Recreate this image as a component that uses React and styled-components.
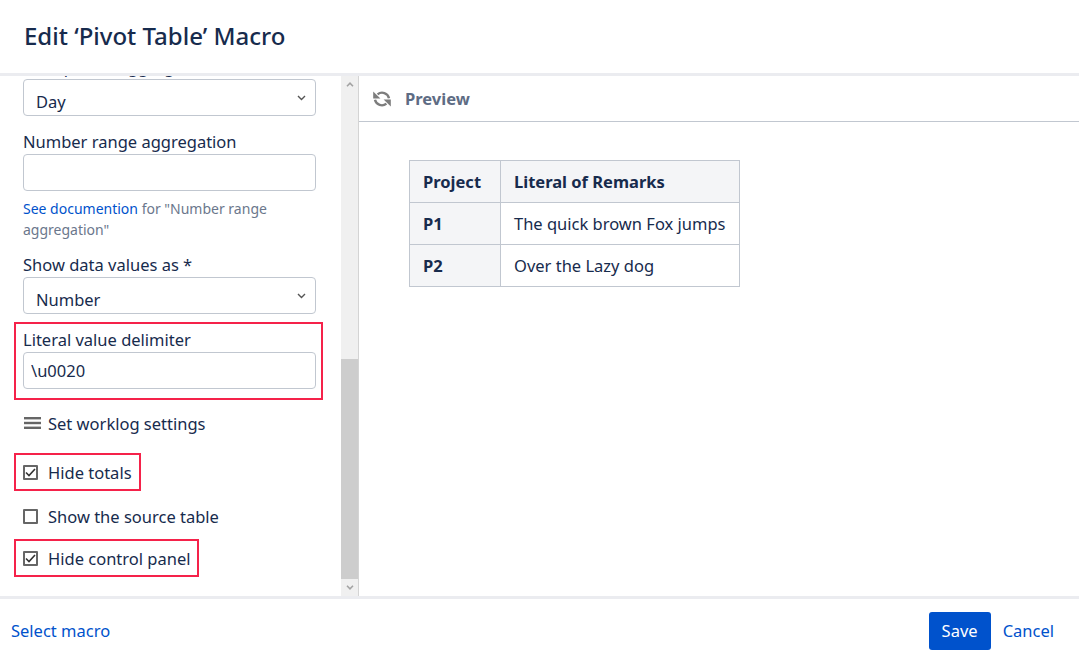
import React from 'react';
import styled, { createGlobalStyle } from 'styled-components';

const GlobalStyle = createGlobalStyle`
  html, body {
    margin: 0;
    padding: 0;
    height: 100%;
    background: #fff;
  }
  body {
    font-family: "Noto Sans", "Open Sans", sans-serif;
    color: #172b4d;
  }
  #root {
    height: 100%;
  }
  * {
    box-sizing: border-box;
  }
`;

const TEXT = '16.5px';

const Dialog = styled.div`
  display: flex;
  flex-direction: column;
  width: 100%;
  height: 100vh;
  overflow: hidden;
`;

const Header = styled.header`
  display: flex;
  align-items: center;
  height: 76px;
  padding: 0 24px 3px;
  border-bottom: 3px solid #ebecf0;
  flex-shrink: 0;
`;

const Title = styled.h1`
  margin: 0;
  font-size: 24px;
  font-weight: 500;
  color: #172b4d;
`;

const Body = styled.div`
  display: flex;
  flex: 1;
  min-height: 0;
`;

const Sidebar = styled.aside`
  display: flex;
  width: 359px;
  flex-shrink: 0;
  border-right: 1px solid #d4d4d4;
`;

const SidebarContent = styled.div`
  flex: 1;
  min-width: 0;
  overflow: hidden;
  padding: 0 25px 0 23px;
`;

const Scrollbar = styled.div`
  display: flex;
  flex-direction: column;
  width: 17px;
  background: #f0f0f0;
  flex-shrink: 0;
`;

const ScrollButton = styled.div`
  display: flex;
  align-items: center;
  justify-content: center;
  height: 17px;
  flex-shrink: 0;
`;

const ScrollTrack = styled.div`
  flex: 1;
  display: flex;
  flex-direction: column;
  justify-content: flex-end;
`;

const ScrollThumb = styled.div`
  height: 220px;
  background: #cdcdcd;
`;

const Field = styled.div`
  display: flex;
  flex-direction: column;
  margin-top: ${(p) => p.$top || 0}px;
`;

const Label = styled.label`
  font-size: ${TEXT};
  line-height: 24px;
  color: #172b4d;
`;

const SelectWrap = styled.div`
  position: relative;
`;

const Select = styled.select`
  appearance: none;
  width: 100%;
  height: 37px;
  padding: 7px 30px 0 12px;
  border: 1px solid #c1c7d0;
  border-radius: 4px;
  background: #fff;
  font-family: inherit;
  font-size: ${TEXT};
  color: #172b4d;
  outline: none;
`;

const Chevron = styled.svg`
  position: absolute;
  right: 10px;
  top: 16px;
  pointer-events: none;
`;

const Input = styled.input`
  width: 100%;
  height: 37px;
  padding: 0 7px;
  border: 1px solid #c1c7d0;
  border-radius: 4px;
  background: #fff;
  font-family: inherit;
  font-size: ${TEXT};
  color: #172b4d;
  outline: none;
`;

const Help = styled.div`
  margin-top: 7px;
  font-size: 14px;
  line-height: 21px;
  color: #6b778c;
`;

const Link = styled.a`
  color: #0052cc;
  text-decoration: none;
  font-size: ${(p) => p.$size || TEXT};
`;

const Highlight = styled.div`
  display: ${(p) => (p.$inline ? 'inline-flex' : 'flex')};
  flex-direction: column;
  align-self: flex-start;
  margin: ${(p) => p.$top || 0}px -7px 0 -9px;
  padding: ${(p) => (p.$inline ? '5px 7px 5px 7px' : '4px 5px 9px 7px')};
  border: 2px solid #f5224a;
  width: ${(p) => (p.$inline ? 'auto' : 'calc(100% + 16px)')};
`;

const Stack = styled.div`
  display: flex;
  flex-direction: column;
`;

const OptionRow = styled.div`
  display: flex;
  align-items: center;
  gap: 7px;
  height: 24px;
  margin-top: ${(p) => p.$top || 0}px;
  padding-left: 1px;
  font-size: ${TEXT};
  color: #172b4d;
`;

const CheckRow = styled.label`
  display: flex;
  align-items: center;
  gap: 10px;
  height: 24px;
  margin-top: ${(p) => p.$top || 0}px;
  font-size: ${TEXT};
  color: #172b4d;
  white-space: nowrap;
`;

const Box = styled.span`
  display: flex;
  align-items: center;
  justify-content: center;
  width: 15px;
  height: 15px;
  border: 2px solid #666;
  border-radius: 1px;
  background: #fff;
  flex-shrink: 0;
`;

const Preview = styled.section`
  flex: 1;
  display: flex;
  flex-direction: column;
  min-width: 0;
`;

const PreviewHeader = styled.div`
  display: flex;
  align-items: center;
  gap: 13px;
  height: 46px;
  padding-left: 13px;
  border-bottom: 1px solid #c1c7d0;
  font-size: ${TEXT};
  font-weight: 700;
  color: #5e6c84;
`;

const PreviewBody = styled.div`
  padding: 38px 0 0 50px;
`;

const Table = styled.table`
  border-collapse: collapse;
  font-size: ${TEXT};
  color: #172b4d;
`;

const Cell = styled.td`
  height: 42px;
  padding: 0 13px;
  border: 1px solid #c1c7d0;
  background: ${(p) => (p.$head ? '#f4f5f7' : '#fff')};
  font-weight: ${(p) => (p.$head ? 700 : 400)};
  width: ${(p) => (p.$w ? `${p.$w}px` : 'auto')};
  white-space: nowrap;
`;

const Footer = styled.footer`
  display: flex;
  align-items: center;
  height: 63px;
  padding: 3px 25px 0 11px;
  border-top: 3px solid #ebecf0;
  flex-shrink: 0;
`;

const Spacer = styled.div`
  flex: 1;
`;

const PrimaryButton = styled.button`
  height: 38px;
  padding: 0 13px;
  border: none;
  border-radius: 3px;
  background: #0052cc;
  color: #fff;
  font-family: inherit;
  font-size: ${TEXT};
  cursor: pointer;
`;

const CancelLink = styled(Link)`
  margin-left: 12px;
`;

const ChevronDown = () => (
  <Chevron width="9" height="6" viewBox="0 0 9 6">
    <path d="M1 1l3.5 3.5L8 1" fill="none" stroke="#555" strokeWidth="1.4" />
  </Chevron>
);

const Check = ({ checked }) => (
  <Box>
    {checked && (
      <svg width="11" height="9" viewBox="0 0 11 9">
        <path d="M1 4.5l3 3L10 1" fill="none" stroke="#333" strokeWidth="1.6" />
      </svg>
    )}
  </Box>
);

const MenuIcon = () => (
  <svg width="17" height="14" viewBox="0 0 17 14">
    <rect x="0" y="1" width="17" height="2.4" fill="#666" />
    <rect x="0" y="5.8" width="17" height="2.4" fill="#666" />
    <rect x="0" y="10.6" width="17" height="2.4" fill="#666" />
  </svg>
);

const RefreshIcon = () => (
  <svg width="20" height="20" viewBox="0 0 20 20" style={{ flexShrink: 0 }}>
    <path d="M17 9.2A7 7 0 0 0 5.6 5.4" fill="none" stroke="#7d7d7d" strokeWidth="2.4" />
    <path d="M1.2 2.4V9.6H8.4Z" fill="#7d7d7d" />
    <path d="M3 10.8A7 7 0 0 0 14.4 14.6" fill="none" stroke="#7d7d7d" strokeWidth="2.4" />
    <path d="M18.8 17.6V10.4H11.6Z" fill="#7d7d7d" />
  </svg>
);

const ScrollArrow = ({ up }) => (
  <svg width="8" height="5" viewBox="0 0 8 5">
    <path
      d={up ? 'M1 4.2L4 1.2 7 4.2' : 'M1 0.8L4 3.8 7 0.8'}
      fill="none"
      stroke="#a3a3a3"
      strokeWidth="1.6"
    />
  </svg>
);

const App = () => (
  <>
    <GlobalStyle />
    <Dialog>
      <Header>
        <Title>Edit ‘Pivot Table’ Macro</Title>
      </Header>
      <Body>
        <Sidebar>
          <SidebarContent>
            <Field $top={-21}>
              <Label>Date period aggregation</Label>
              <SelectWrap>
                <Select defaultValue="day">
                  <option value="day">Day</option>
                </Select>
                <ChevronDown />
              </SelectWrap>
            </Field>
            <Field $top={14}>
              <Label>Number range aggregation</Label>
              <Input />
              <Help>
                <Link $size="14px" href="#">See documention</Link> for "Number range
                aggregation"
              </Help>
            </Field>
            <Field $top={13}>
              <Label>Show data values as *</Label>
              <SelectWrap>
                <Select defaultValue="number">
                  <option value="number">Number</option>
                </Select>
                <ChevronDown />
              </SelectWrap>
            </Field>
            <Highlight $top={8}>
              <Label>Literal value delimiter</Label>
              <Input defaultValue="\u0020" />
            </Highlight>
            <OptionRow $top={11}>
              <MenuIcon />
              Set worklog settings
            </OptionRow>
            <Stack>
              <Highlight $inline $top={18}>
                <CheckRow>
                  <Check checked />
                  Hide totals
                </CheckRow>
              </Highlight>
              <CheckRow $top={13}>
                <Check />
                Show the source table
              </CheckRow>
              <Highlight $inline $top={11}>
                <CheckRow>
                  <Check checked />
                  Hide control panel
                </CheckRow>
              </Highlight>
            </Stack>
          </SidebarContent>
          <Scrollbar>
            <ScrollButton>
              <ScrollArrow up />
            </ScrollButton>
            <ScrollTrack>
              <ScrollThumb />
            </ScrollTrack>
            <ScrollButton>
              <ScrollArrow />
            </ScrollButton>
          </Scrollbar>
        </Sidebar>
        <Preview>
          <PreviewHeader>
            <RefreshIcon />
            Preview
          </PreviewHeader>
          <PreviewBody>
            <Table>
              <tbody>
                <tr>
                  <Cell $head $w={91}>Project</Cell>
                  <Cell $head $w={238}>Literal of Remarks</Cell>
                </tr>
                <tr>
                  <Cell $head>P1</Cell>
                  <Cell>The quick brown Fox jumps</Cell>
                </tr>
                <tr>
                  <Cell $head>P2</Cell>
                  <Cell>Over the Lazy dog</Cell>
                </tr>
              </tbody>
            </Table>
          </PreviewBody>
        </Preview>
      </Body>
      <Footer>
        <Link href="#">Select macro</Link>
        <Spacer />
        <PrimaryButton type="button">Save</PrimaryButton>
        <CancelLink href="#">Cancel</CancelLink>
      </Footer>
    </Dialog>
  </>
);

export default App;
